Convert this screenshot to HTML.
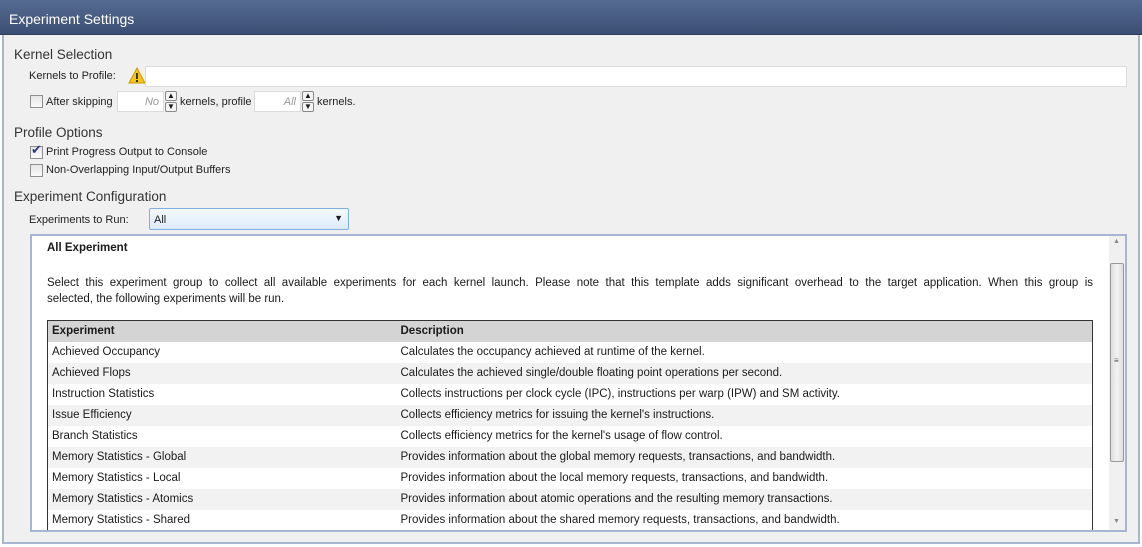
<!DOCTYPE html>
<html><head><meta charset="utf-8"><style>
*{box-sizing:border-box;margin:0;padding:0}
body{width:1142px;height:547px;background:#fff;font-family:"Liberation Sans",sans-serif;color:#1a1a1a;position:relative;overflow:hidden}
.frame{position:absolute;left:2px;top:2px;width:1138px;height:542px;border:2px solid #a7b6cf;border-top:none;background:#f0f0f0}
.hdr{position:absolute;left:0;top:0;width:1142px;height:35px;background:linear-gradient(#566b91,#3b4f75);border-bottom:1px solid #2d3d5c}
.hdr span{position:absolute;left:9px;top:11px;color:#fff;font-size:14px}
.a{position:absolute;white-space:nowrap}
.h2{font-size:13.5px;color:#333}
.s{font-size:11px;color:#222}
.cb{position:absolute;width:13px;height:13px;border:1px solid #8f8f8f;background:linear-gradient(#e6e6e6,#fafafa)}
.in{position:absolute;background:#fff;border:1px solid #dcdcdc}
.spin{position:absolute;width:12px;height:21px;}
.spin div{height:10px;border:1px solid #888;border-radius:2px;background:#f4f4f4;font-size:8px;line-height:8px;text-align:center;margin-bottom:1px}
.box{position:absolute;left:30px;top:234px;width:1097px;height:298px;border:2px solid #a7b6cf;background:#fff;overflow:hidden}
table{position:absolute;left:15px;top:84px;width:1046px;border-collapse:collapse;border:1px solid #333;border-bottom:none;font-size:11.5px}
td{height:21px;padding:0 4px;white-space:nowrap}
tr:nth-child(odd) td{background:#f2f2f2}
tr:nth-child(even) td{background:#fff}
tr.th td{background:#d4d4d4;font-weight:bold}
.sb{position:absolute;right:0;top:0;width:16px;height:294px;background:#f0f0f0}
.thumb{position:absolute;left:1px;top:27px;width:14px;height:199px;border:1px solid #999;border-radius:2px;background:linear-gradient(90deg,#ddd,#f2f2f2,#ddd)}
.p{position:absolute;left:15px;width:1046px;font-size:11.5px;line-height:16px;white-space:nowrap}
</style></head><body>
<div class="frame"></div>
<div class="hdr"><span>Experiment Settings</span></div>

<div class="a h2" style="left:14px;top:47px">Kernel Selection</div>
<div class="a s" style="left:29px;top:70px">Kernels to Profile:</div>
<svg class="a" style="left:128px;top:67px" width="18" height="17"><path d="M9 1 L17 16 L1 16 Z" fill="#f5c518" stroke="#c99a00"/><rect x="8" y="6" width="2" height="6" fill="#333"/><rect x="8" y="13" width="2" height="2" fill="#333"/></svg>
<div class="in" style="left:145px;top:66px;width:982px;height:21px"></div>

<div class="cb" style="left:30px;top:95px"></div>
<div class="a s" style="left:46px;top:96px">After skipping</div>
<div class="in" style="left:117px;top:91px;width:47px;height:21px"><i class="a s" style="right:4px;top:4px;color:#999">No</i></div>
<div class="spin a" style="left:165px;top:91px"><div>▲</div><div>▼</div></div>
<div class="a s" style="left:180px;top:96px">kernels, profile</div>
<div class="in" style="left:254px;top:91px;width:47px;height:21px"><i class="a s" style="right:4px;top:4px;color:#999">All</i></div>
<div class="spin a" style="left:302px;top:91px"><div>▲</div><div>▼</div></div>
<div class="a s" style="left:317px;top:96px">kernels.</div>

<div class="a h2" style="left:14px;top:125px">Profile Options</div>
<div class="cb" style="left:30px;top:146px"></div>
<div class="a" style="left:31px;top:142px;font-size:13px;color:#2a3a8a">✔</div>
<div class="a s" style="left:46px;top:146px">Print Progress Output to Console</div>
<div class="cb" style="left:30px;top:164px"></div>
<div class="a s" style="left:46px;top:164px">Non-Overlapping Input/Output Buffers</div>

<div class="a h2" style="left:14px;top:189px">Experiment Configuration</div>
<div class="a s" style="left:29px;top:214px">Experiments to Run:</div>
<div class="a" style="left:149px;top:208px;width:200px;height:22px;border:1px solid #7fb0e0;border-radius:2px;background:linear-gradient(#f4f9fe,#dceaf8)"><span class="a s" style="left:4px;top:5px">All</span><span class="a" style="right:5px;top:4px;font-size:9px">▼</span></div>

<div class="box">
<div class="a" style="left:15px;top:6px;font-size:11.5px;font-weight:bold">All Experiment</div>
<div class="p" style="top:39px;text-align:justify;text-align-last:justify;white-space:normal;height:16px;overflow:hidden">Select this experiment group to collect all available experiments for each kernel launch. Please note that this template adds significant overhead to the target application. When this group is</div>
<div class="p" style="top:55px">selected, the following experiments will be run.</div>
<table>
<tr class="th"><td style="width:349px">Experiment</td><td>Description</td></tr>
<tr><td>Achieved Occupancy</td><td>Calculates the occupancy achieved at runtime of the kernel.</td></tr>
<tr><td>Achieved Flops</td><td>Calculates the achieved single/double floating point operations per second.</td></tr>
<tr><td>Instruction Statistics</td><td>Collects instructions per clock cycle (IPC), instructions per warp (IPW) and SM activity.</td></tr>
<tr><td>Issue Efficiency</td><td>Collects efficiency metrics for issuing the kernel's instructions.</td></tr>
<tr><td>Branch Statistics</td><td>Collects efficiency metrics for the kernel's usage of flow control.</td></tr>
<tr><td>Memory Statistics - Global</td><td>Provides information about the global memory requests, transactions, and bandwidth.</td></tr>
<tr><td>Memory Statistics - Local</td><td>Provides information about the local memory requests, transactions, and bandwidth.</td></tr>
<tr><td>Memory Statistics - Atomics</td><td>Provides information about atomic operations and the resulting memory transactions.</td></tr>
<tr><td>Memory Statistics - Shared</td><td>Provides information about the shared memory requests, transactions, and bandwidth.</td></tr>
<tr><td>Memory Statistics - Texture</td><td>Provides information about the texture memory requests, transactions, and bandwidth.</td></tr>
</table>
<div class="sb"><span class="a" style="left:4px;top:2px;font-size:7px;color:#888">▲</span><div class="thumb"><span class="a" style="left:3px;top:92px;font-size:8px;color:#555">≡</span></div><span class="a" style="left:4px;top:282px;font-size:7px;color:#888">▼</span></div>
</div>
</body></html>
